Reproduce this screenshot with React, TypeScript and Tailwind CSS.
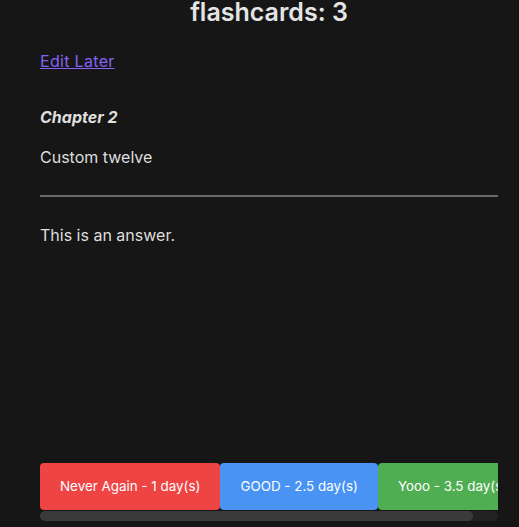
import React from "react";

const grades = [
  { label: "Never Again - 1 day(s)", className: "bg-[#ef4444]" },
  { label: "GOOD - 2.5 day(s)", className: "bg-[#4893f3]" },
  { label: "Yooo - 3.5 day(s)", className: "bg-[#4fae51]" },
];

export default function App() {
  return (
    <div className="h-screen flex flex-col bg-[#161616] text-[#dedede] pl-10 pr-[21px] overflow-hidden font-['Inter',sans-serif]">
      <h1 className="text-center text-[25px] leading-[24px] font-semibold text-[#e4e4e4]">flashcards: 3</h1>

      <a href="#" className="mt-[25px] self-start text-base leading-6 tracking-[0.02em] text-[#8462f2] underline">
        Edit Later
      </a>

      <p className="mt-8 text-base leading-6 font-bold italic">Chapter 2</p>
      <p className="mt-4 text-base leading-6">Custom twelve</p>

      <hr className="mt-[26px] border-0 border-t-2 border-[#6a6a6a]" />

      <p className="mt-[26px] text-base leading-6">This is an answer.</p>

      <div className="mt-auto mb-[6px]">
        <div className="flex overflow-hidden">
          {grades.map((g) => (
            <button
              key={g.label}
              className={`${g.className} shrink-0 h-[47px] px-5 rounded text-[13.4px] text-white whitespace-nowrap`}
            >
              {g.label}
            </button>
          ))}
        </div>
        <div className="mt-px h-[10px] rounded-full bg-[#222222]">
          <div className="h-full w-[433px] rounded-full bg-[#3a3a3a]" />
        </div>
      </div>
    </div>
  );
}
